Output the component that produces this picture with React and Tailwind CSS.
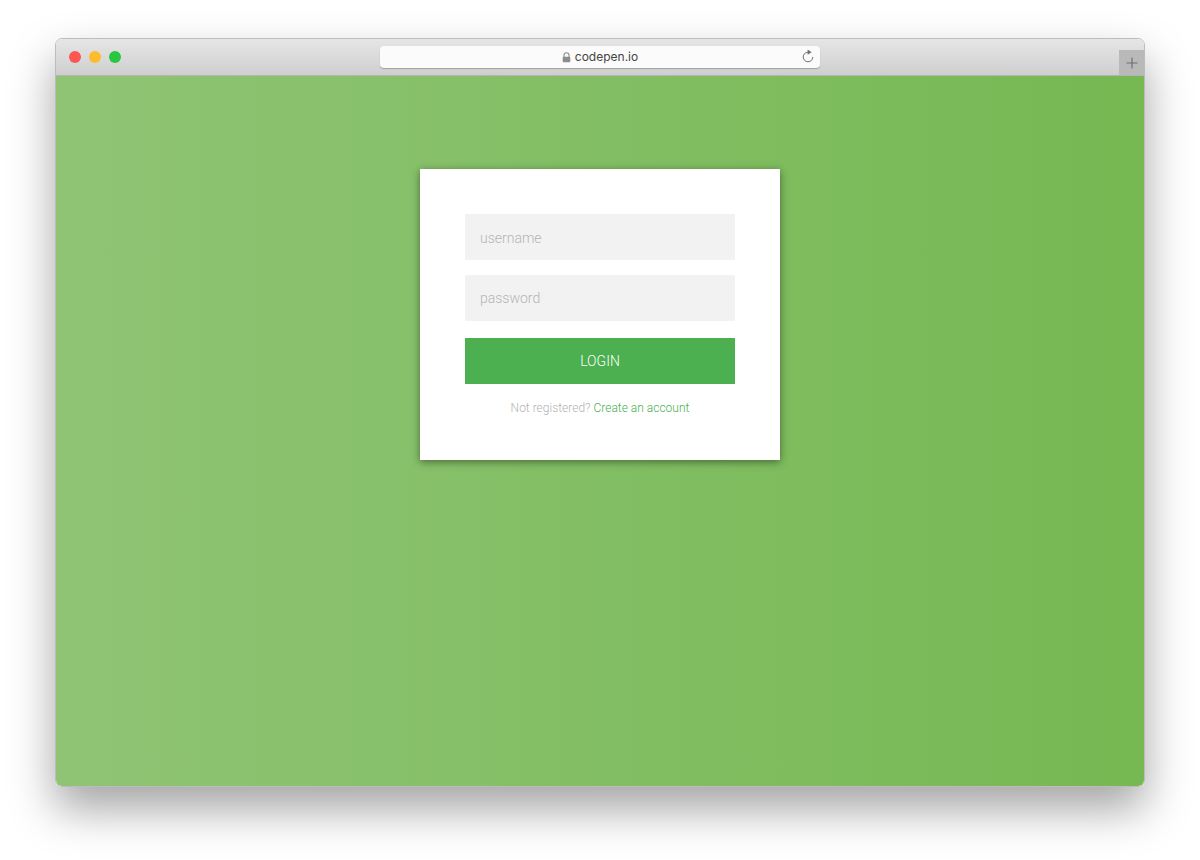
import React from "react";

const font = { fontFamily: "Roboto, sans-serif" };

const TitleBar = () => (
  <div className="grid h-[37px] grid-cols-[1fr_440px_1fr] border-b border-[#b4b4b4] bg-gradient-to-b from-[#e6e6e6] to-[#cfcfcf]">
    <div className="flex items-center gap-2 pl-[12.5px]">
      <span className="h-3 w-3 rounded-full bg-[#fc5753]" />
      <span className="h-3 w-3 rounded-full bg-[#fdbc2e]" />
      <span className="h-3 w-3 rounded-full bg-[#27c83f]" />
    </div>
    <div className="relative mt-[7px] flex h-[22px] items-center justify-center rounded-[4px] bg-[#fbfbfb] shadow-[0_1px_1px_rgba(0,0,0,0.25)]">
      <svg width="9" height="11" viewBox="0 0 10 12" className="mr-[4px]">
        <path d="M2.2 5.5V3.6a2.8 2.8 0 0 1 5.6 0v1.9" fill="none" stroke="#8c8c8c" strokeWidth="1.2" />
        <rect x="0.8" y="5.2" width="8.4" height="6" rx="1" fill="#8c8c8c" />
      </svg>
      <span className="text-[12px] leading-none text-[#444444]" style={{ fontFamily: "Inter, sans-serif" }}>
        codepen.io
      </span>
      <svg width="14" height="15" viewBox="0 0 14 15" className="absolute right-[5px] top-[3px]">
        <path d="M7 3.2a4.8 4.8 0 1 0 4.8 4.8" fill="none" stroke="#6e6e6e" strokeWidth="1" />
        <path d="M6.6 0.4L10.6 3.2L6.6 5.8Z" fill="#6e6e6e" />
      </svg>
    </div>
    <div className="flex items-end justify-end">
      <div className="flex h-[25px] w-[25px] items-center justify-center bg-[#b9b9b9]">
        <svg width="12" height="12" viewBox="0 0 12 12">
          <path d="M6 0.5V11.5M0.5 6H11.5" stroke="#6f6f6f" strokeWidth="1.2" />
        </svg>
      </div>
    </div>
  </div>
);

const LoginCard = () => (
  <div className="h-[291px] w-[360px] bg-white p-[45px] shadow-[0_2px_8px_rgba(0,0,0,0.45)]" style={font}>
    <div className="flex h-[46px] items-center bg-[#f2f2f2] px-[15px] pt-[2px] text-[14px] font-light text-[#b5b5b5]">
      username
    </div>
    <div className="mt-[15px] flex h-[46px] items-center bg-[#f2f2f2] px-[15px] text-[14px] font-light text-[#b5b5b5]">
      password
    </div>
    <div className="mt-[17px] flex h-[46px] items-center justify-center bg-[#4caf50] text-[14px] font-light text-white">
      LOGIN
    </div>
    <div className="mt-[16px] text-center text-[12px] leading-[16px] font-light text-[#b3b3b3]">
      Not registered? <span className="text-[#4caf50]">Create an account</span>
    </div>
  </div>
);

const App = () => (
  <div className="h-[860px] w-[1200px] overflow-hidden bg-white pt-[38px] pl-[55px]">
    <div className="h-[749px] w-[1090px] overflow-hidden rounded-[7px] border border-[#bcbcbc] shadow-[0_22px_45px_rgba(0,0,0,0.36)]">
      <TitleBar />
      <div className="flex h-[710px] justify-center bg-gradient-to-r from-[#8fc474] to-[#76b852] pt-[93px]">
        <LoginCard />
      </div>
    </div>
  </div>
);

export default App;
